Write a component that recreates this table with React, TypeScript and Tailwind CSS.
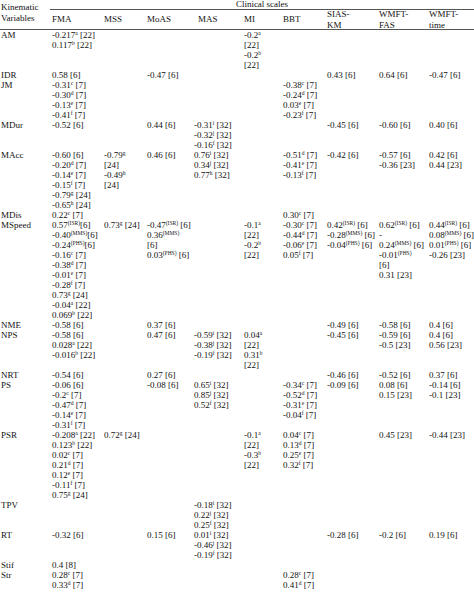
type Cells = {
  fma?: string[];
  mss?: string[];
  moas?: string[];
  mas?: string[];
  mi?: string[];
  bbt?: string[];
  sias?: string[];
  fas?: string[];
  time?: string[];
};

const order: (keyof Cells)[] = ["fma", "mss", "moas", "mas", "mi", "bbt", "sias", "fas", "time"];

const rows: { label: string; cells: Cells }[] = [
  {
    label: "AM",
    cells: {
      fma: ["-0.217^a [22]", "0.117^b [22]"],
      mi: ["-0.2^a", "[22]", "-0.2^b", "[22]"],
    },
  },
  {
    label: "IDR",
    cells: { fma: ["0.58 [6]"], moas: ["-0.47 [6]"], sias: ["0.43 [6]"], fas: ["0.64 [6]"], time: ["-0.47 [6]"] },
  },
  {
    label: "JM",
    cells: {
      fma: ["-0.31^c [7]", "-0.30^d [7]", "-0.13^e [7]", "-0.41^f [7]"],
      bbt: ["-0.38^c [7]", "-0.24^d [7]", "0.03^e [7]", "-0.23^f [7]"],
    },
  },
  {
    label: "MDur",
    cells: {
      fma: ["-0.52 [6]"],
      moas: ["0.44 [6]"],
      mas: ["-0.31^i [32]", "-0.32^j [32]", "-0.16^f [32]"],
      sias: ["-0.45 [6]"],
      fas: ["-0.60 [6]"],
      time: ["0.40 [6]"],
    },
  },
  {
    label: "MAcc",
    cells: {
      fma: ["-0.60 [6]", "-0.20^d [7]", "-0.14^e [7]", "-0.15^f [7]", "-0.79^g [24]", "-0.65^h [24]"],
      mss: ["-0.79^g", "[24]", "-0.49^h", "[24]"],
      moas: ["0.46 [6]"],
      mas: ["0.76^i [32]", "0.34^j [32]", "0.77^h [32]"],
      bbt: ["-0.51^d [7]", "-0.41^e [7]", "-0.13^f [7]"],
      sias: ["-0.42 [6]"],
      fas: ["-0.57 [6]", "-0.36 [23]"],
      time: ["0.42 [6]", "0.44 [23]"],
    },
  },
  {
    label: "MDis",
    cells: { fma: ["0.22^c [7]"], bbt: ["0.30^c [7]"] },
  },
  {
    label: "MSpeed",
    cells: {
      fma: [
        "0.57^(ISR)[6]",
        "-0.40^(MMS)[6]",
        "-0.24^(PHS)[6]",
        "-0.16^c [7]",
        "-0.38^d [7]",
        "-0.01^e [7]",
        "-0.28^f [7]",
        "0.73^g [24]",
        "-0.04^a [22]",
        "0.069^b [22]",
      ],
      mss: ["0.73^g [24]"],
      moas: ["-0.47^(ISR) [6]", "0.36^(MMS)", "[6]", "0.03^(PHS) [6]"],
      mi: ["-0.1^a", "[22]", "-0.2^b", "[22]"],
      bbt: ["-0.30^c [7]", "-0.44^d [7]", "-0.06^e [7]", "0.05^f [7]"],
      sias: ["0.42^(ISR) [6]", "-0.28^(MMS) [6]", "-0.04^(PHS) [6]"],
      fas: ["0.62^(ISR) [6]", "-", "0.24^(MMS) [6]", "-0.01^(PHS)", "[6]", "0.31 [23]"],
      time: ["0.44^(ISR) [6]", "0.08^(MMS) [6]", "0.01^(PHS) [6]", "-0.26 [23]"],
    },
  },
  {
    label: "NME",
    cells: { fma: ["-0.58 [6]"], moas: ["0.37 [6]"], sias: ["-0.49 [6]"], fas: ["-0.58 [6]"], time: ["0.4 [6]"] },
  },
  {
    label: "NPS",
    cells: {
      fma: ["-0.58 [6]", "0.028^a [22]", "-0.016^b [22]"],
      moas: ["0.47 [6]"],
      mas: ["-0.59^i [32]", "-0.38^j [32]", "-0.19^f [32]"],
      mi: ["0.04^a", "[22]", "0.31^b", "[22]"],
      sias: ["-0.45 [6]"],
      fas: ["-0.59 [6]", "-0.5 [23]"],
      time: ["0.4 [6]", "0.56 [23]"],
    },
  },
  {
    label: "NRT",
    cells: { fma: ["-0.54 [6]"], moas: ["0.27 [6]"], sias: ["-0.46 [6]"], fas: ["-0.52 [6]"], time: ["0.37 [6]"] },
  },
  {
    label: "PS",
    cells: {
      fma: ["-0.06 [6]", "-0.2^c [7]", "-0.47^d [7]", "-0.14^e [7]", "-0.31^f [7]"],
      moas: ["-0.08 [6]"],
      mas: ["0.65^i [32]", "0.85^j [32]", "0.52^f [32]"],
      bbt: ["-0.34^c [7]", "-0.52^d [7]", "-0.31^e [7]", "-0.04^f [7]"],
      sias: ["-0.09 [6]"],
      fas: ["0.08 [6]", "0.15 [23]"],
      time: ["-0.14 [6]", "-0.1 [23]"],
    },
  },
  {
    label: "PSR",
    cells: {
      fma: ["-0.208^a [22]", "0.123^b [22]", "0.02^c [7]", "0.21^d [7]", "0.12^e [7]", "-0.11^f [7]", "0.75^g [24]"],
      mss: ["0.72^g [24]"],
      mi: ["-0.1^a", "[22]", "-0.3^b", "[22]"],
      bbt: ["0.04^c [7]", "0.13^d [7]", "0.25^e [7]", "0.32^f [7]"],
      fas: ["0.45 [23]"],
      time: ["-0.44 [23]"],
    },
  },
  {
    label: "TPV",
    cells: { mas: ["-0.18^i [32]", "0.22^j [32]", "0.25^f [32]"] },
  },
  {
    label: "RT",
    cells: {
      fma: ["-0.32 [6]"],
      moas: ["0.15 [6]"],
      mas: ["0.01^i [32]", "-0.46^j [32]", "-0.19^f [32]"],
      sias: ["-0.28 [6]"],
      fas: ["-0.2 [6]"],
      time: ["0.19 [6]"],
    },
  },
  { label: "Stif", cells: { fma: ["0.4 [8]"] } },
  {
    label: "Str",
    cells: { fma: ["0.28^c [7]", "0.33^d [7]"], bbt: ["0.28^c [7]", "0.41^d [7]"] },
  },
];

const headers: { label: string[]; className?: string }[] = [
  { label: ["FMA"] },
  { label: ["MSS"] },
  { label: ["MoAS"] },
  { label: ["MAS"], className: "pl-[4px]" },
  { label: ["MI"] },
  { label: ["BBT"] },
  { label: ["SIAS-", "KM"] },
  { label: ["WMFT-", "FAS"] },
  { label: ["WMFT-", "time"] },
];

// "0.57^(ISR)[6]" -> superscript runs after a caret
function Line({ text }: { text: string }) {
  const parts = text.split(/\^([^\s\[]+)/);
  return (
    <div className="whitespace-nowrap">
      {parts.map((p, i) =>
        i % 2 ? (
          <sup key={i} className="text-[5.5px] -top-[3px]">
            {p}
          </sup>
        ) : (
          <span key={i}>{p}</span>
        )
      )}
    </div>
  );
}

export default function App() {
  return (
    <div className="w-[474px] h-[593px] overflow-hidden bg-white text-[#111] text-[9px] font-['Liberation_Serif',serif]">
      {/* header */}
      <div className="grid grid-cols-[51px_52px_43px_47px_50px_39px_44px_52px_50px_45px] pl-[1px] border-b border-[#555]">
        <div className="row-span-2 pt-[2px] leading-[11px]">
          Kinematic
          <br />
          Variables
        </div>
        <div className="col-span-9 -ml-[2px] h-[10px] border-b border-[#555] text-center leading-[9px]">
          Clinical scales
        </div>
        {headers.map((h) => (
          <div key={h.label.join("")} className={`h-[19px] flex flex-col justify-center leading-[11px] ${h.className ?? ""}`}>
            {h.label.map((l) => (
              <div key={l}>{l}</div>
            ))}
          </div>
        ))}
      </div>

      {/* body */}
      <div className="flex flex-col leading-[10px]">
        {rows.map((r) => (
          <div
            key={r.label}
            className="grid grid-cols-[51px_52px_43px_47px_50px_39px_44px_52px_50px_45px] pl-[1px]"
          >
            <div>{r.label}</div>
            {order.map((k) => (
              <div key={k}>
                {(r.cells[k] ?? []).map((t, i) => (
                  <Line key={i} text={t} />
                ))}
              </div>
            ))}
          </div>
        ))}
      </div>
    </div>
  );
}
